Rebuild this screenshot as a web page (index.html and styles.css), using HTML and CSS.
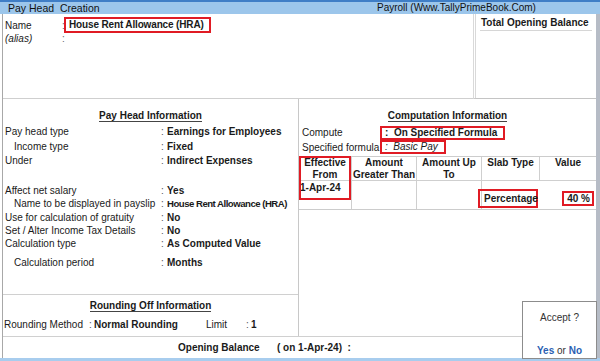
FILE: index.html
```html
<!DOCTYPE html>
<html>
<head>
<meta charset="utf-8">
<link rel="stylesheet" href="styles.css">
</head>
<body>
<div class="screen">
  <div class="titlebar">
    <span class="tb-left">Pay Head&nbsp; Creation</span>
    <span class="tb-center">Payroll (Www.TallyPrimeBook.Com)</span>
  </div>
  <div class="content">
    <div class="top">
      <div class="name-area">
        <div class="name-row">
          <span class="lbl">Name</span>
          <span class="colon">:</span>
          <span class="name-box">House Rent Allowance (HRA)</span>
        </div>
        <div class="alias-row">
          <span class="lbl italic">(alias)</span>
          <span class="colon">:</span>
        </div>
      </div>
      <div class="tob">
        <div class="tob-head">Total Opening Balance</div>
      </div>
    </div>

    <div class="middle">
      <div class="left-col">
        <div class="phi">
          <div class="sec-head"><span>Pay Head Information</span></div>
          <div class="rows rows-a">
            <div class="row"><span class="k">Pay head type</span><span class="c">:</span><span class="v">Earnings for Employees</span></div>
            <div class="row"><span class="k ind">Income type</span><span class="c">:</span><span class="v">Fixed</span></div>
            <div class="row"><span class="k">Under</span><span class="c">:</span><span class="v">Indirect Expenses</span></div>
          </div>
          <div class="rows rows-b">
            <div class="row"><span class="k">Affect net salary</span><span class="c">:</span><span class="v">Yes</span></div>
            <div class="row"><span class="k ind">Name to be displayed in payslip</span><span class="c">:</span><span class="v narrow">House Rent Allowance (HRA)</span></div>
            <div class="row"><span class="k">Use for calculation of gratuity</span><span class="c">:</span><span class="v">No</span></div>
            <div class="row"><span class="k">Set / Alter Income Tax Details</span><span class="c">:</span><span class="v">No</span></div>
            <div class="row"><span class="k">Calculation type</span><span class="c">:</span><span class="v">As Computed Value</span></div>
            <div class="row period"><span class="k ind">Calculation period</span><span class="c">:</span><span class="v">Months</span></div>
          </div>
        </div>
        <div class="rounding">
          <div class="sec-head small"><span>Rounding Off Information</span></div>
          <div class="round-row">
            <span class="rk">Rounding Method</span><span class="c">:</span><span class="rv method">Normal Rounding</span>
            <span class="lim">Limit</span><span class="c2">:</span><span class="rv">1</span>
          </div>
        </div>
      </div>

      <div class="right-col">
        <div class="sec-head"><span>Computation Information</span></div>
        <div class="comp-row">
          <span class="ck">Compute</span>
          <span class="redbox bold">: &nbsp;On Specified Formula</span>
        </div>
        <div class="comp-row">
          <span class="ck">Specified formula</span>
          <span class="redbox italic">: &nbsp;Basic Pay</span>
        </div>
        <div class="table">
          <div class="annot"></div>
          <div class="th">Effective<br>From</div>
          <div class="th">Amount<br>Greater Than</div>
          <div class="th">Amount Up<br>To</div>
          <div class="th">Slab Type</div>
          <div class="th last">Value</div>
          <div class="td date">1-Apr-24</div>
          <div class="td"></div>
          <div class="td"></div>
          <div class="td slab"><span class="redbox2">Percentage</span></div>
          <div class="td last val"><span class="redbox3">40 %</span></div>
        </div>
      </div>
    </div>

    <div class="footer">
      <span class="ob">Opening Balance</span>
      <span class="ob-date">( on 1-Apr-24)&nbsp; :</span>
    </div>
  </div>
  <div class="bottom-strip"></div>

  <div class="accept">
    <div class="acc-q">Accept ?</div>
    <div class="acc-a"><span class="yn">Yes</span> or <span class="yn">No</span></div>
  </div>
</div>
</body>
</html>
```

FILE: styles.css
```css
html, body {
  margin: 0;
  padding: 0;
}
body {
  width: 600px;
  height: 361px;
  overflow: hidden;
  background: #ffffff;
  font-family: "Liberation Sans", Arial, sans-serif;
  font-size: 10px;
  color: #1a1a1a;
  white-space: nowrap;
}
.screen {
  position: relative;
  width: 600px;
  height: 361px;
  display: flex;
  flex-direction: column;
}
.titlebar {
  height: 12px;
  border-top: 2px solid #3f7ec6;
  background: #9cc6eb;
  display: flex;
  align-items: center;
  line-height: 12px;
  font-size: 10px;
  color: #111;
}
.tb-left {
  padding-left: 8px;
  width: 369px;
  flex-shrink: 0;
  font-size: 10.5px;
}
.content {
  flex: 1;
  display: flex;
  flex-direction: column;
  margin-left: 2px;
  border-left: 1px solid #a8a8a8;
  border-right: 4px solid #b6bcc6;
  min-height: 0;
}
.top {
  height: 84px;
  display: flex;
  border-bottom: 1px solid #cfcfcf;
}
.name-area {
  flex: 1;
  padding-top: 3px;
}
.name-row, .alias-row {
  display: flex;
  align-items: center;
}
.name-row {
  height: 16px;
}
.alias-row {
  height: 12px;
  line-height: 12px;
}
.lbl {
  width: 57px;
  padding-left: 2px;
  flex-shrink: 0;
}
.name-row .colon {
  width: 2px;
}
.italic {
  font-style: italic;
}
.bold {
  font-weight: bold;
}
.colon {
  width: 3px;
  color: #666;
  flex-shrink: 0;
}
.name-box {
  border: 2px solid #e01b24;
  padding: 0 5px 0 3px;
  height: 12px;
  line-height: 12px;
  font-weight: bold;
  font-size: 10px;
  letter-spacing: -0.15px;
}
.tob {
  width: 120px;
  flex-shrink: 0;
  border-left: 3px double #d9d9d9;
  border-bottom: 1px solid #c4c4c4;
  margin-bottom: -1px;
}
.tob-head {
  margin: 3px 4px 0 4px;
  font-weight: bold;
  font-size: 10px;
  line-height: 12px;
  padding-left: 1px;
  border-bottom: 1px solid #d6d6d6;
  padding-bottom: 1px;
}
.middle {
  height: 237px;
  display: flex;
  border-bottom: 1px solid #d0d0d0;
}
.left-col {
  width: 295px;
  flex-shrink: 0;
  border-right: 1px solid #c8c8c8;
  display: flex;
  flex-direction: column;
}
.phi {
  flex: 1;
  border-bottom: 1px solid #d0d0d0;
}
.sec-head {
  text-align: center;
  font-weight: bold;
  font-size: 10px;
  padding-top: 11px;
  line-height: 12px;
  height: 15px;
}
.sec-head span {
  border-bottom: 1px solid #444;
}
.rows {
  display: flex;
  flex-direction: column;
}
.rows-a .row {
  height: 14.5px;
}
.rows-b {
  margin-top: 16px;
}
.row {
  display: flex;
  align-items: center;
  height: 13.3px;
  line-height: 12px;
}
.row.period {
  margin-top: 5px;
}
.k {
  width: 156px;
  padding-left: 2px;
  flex-shrink: 0;
}
.k.ind {
  padding-left: 11px;
  width: 147px;
}
.c {
  width: 6px;
  color: #555;
  flex-shrink: 0;
}
.v {
  font-weight: bold;
}
.v.narrow {
  font-size: 9.6px;
  letter-spacing: -0.5px;
}
.rounding {
  height: 41px;
}
.sec-head.small {
  padding-top: 5px;
  height: 13px;
}
.round-row {
  display: flex;
  align-items: center;
  height: 14px;
  margin-top: 4px;
  padding-left: 1px;
}
.rk {
  width: 85px;
  flex-shrink: 0;
}
.round-row .c {
  width: 5px;
}
.rv {
  font-weight: bold;
}
.rv.method {
  width: 112px;
  flex-shrink: 0;
}
.lim {
  width: 40px;
  flex-shrink: 0;
}
.c2 {
  width: 5px;
  color: #555;
  flex-shrink: 0;
}
.right-col {
  flex: 1;
  display: flex;
  flex-direction: column;
}
.comp-row {
  display: flex;
  align-items: center;
  height: 15px;
}
.comp-row + .comp-row {
  height: 14px;
}
.ck {
  width: 78px;
  padding-left: 3px;
  flex-shrink: 0;
}
.redbox {
  border: 2px solid #e01b24;
  padding: 0 6px 0 3px;
  line-height: 10px;
  height: 10px;
  font-size: 10px;
}
.table {
  position: relative;
  margin-top: 2px;
  border-top: 1px solid #cccccc;
  border-bottom: 1px solid #cccccc;
  display: grid;
  grid-template-columns: 53px 65px 65px 58px 1fr;
  grid-template-rows: 24px 28px;
}
.th {
  border-right: 1px solid #cfcfcf;
  border-bottom: 1px solid #cfcfcf;
  text-align: center;
  font-weight: bold;
  line-height: 12px;
}
.th.last, .td.last {
  border-right: none;
}
.td {
  border-right: 1px solid #cfcfcf;
}
.td.date {
  font-weight: bold;
  line-height: 12px;
  padding-top: 1px;
  padding-left: 1px;
}
.td.slab, .td.val {
  border-right: none;
  display: flex;
  align-items: flex-end;
  padding-bottom: 1px;
}
.td.val {
  justify-content: flex-end;
  padding-right: 2px;
}
.redbox2 {
  border: 2px solid #e01b24;
  font-weight: bold;
  width: 52px;
  height: 15px;
  line-height: 15px;
  padding-left: 4px;
  margin-left: -4px;
}
.redbox3 {
  border: 2px solid #e01b24;
  font-weight: bold;
  height: 11px;
  line-height: 11px;
  padding: 0 2px 0 3px;
  margin-bottom: 2px;
}
.annot {
  position: absolute;
  left: 0;
  top: -1px;
  width: 48px;
  height: 40px;
  border: 2px solid #e01b24;
  pointer-events: none;
}
.footer {
  flex: 1;
  display: flex;
  align-items: center;
  font-weight: bold;
}
.ob {
  margin-left: 175px;
  width: 99px;
  flex-shrink: 0;
}
.bottom-strip {
  height: 3px;
  background: #a8cdee;
}
.accept {
  position: absolute;
  left: 522px;
  top: 301px;
  width: 73px;
  height: 56px;
  background: #ffffff;
  border: 1px solid #8c8c8c;
  text-align: center;
  color: #333;
}
.acc-q {
  margin-top: 10px;
  line-height: 12px;
}
.acc-a {
  margin-top: 21px;
  line-height: 12px;
  color: #333;
}
.yn {
  color: #2b5fb3;
  font-weight: bold;
}
```
